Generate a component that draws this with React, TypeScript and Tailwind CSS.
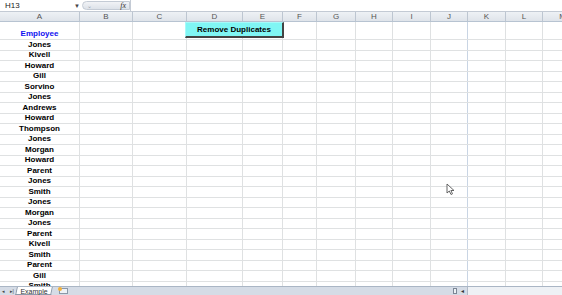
import React from "react";

const cols = [
  { l: "A", w: 80 },
  { l: "B", w: 53 },
  { l: "C", w: 54 },
  { l: "D", w: 56 },
  { l: "E", w: 40 },
  { l: "F", w: 34 },
  { l: "G", w: 39 },
  { l: "H", w: 37 },
  { l: "I", w: 38 },
  { l: "J", w: 37 },
  { l: "K", w: 38 },
  { l: "L", w: 37 },
  { l: "M", w: 40 },
];

const names = [
  "Jones", "Kivell", "Howard", "Gill", "Sorvino", "Jones", "Andrews", "Howard",
  "Thompson", "Jones", "Morgan", "Howard", "Parent", "Jones", "Smith", "Jones",
  "Morgan", "Jones", "Parent", "Kivell", "Smith", "Parent", "Gill", "Smith",
];

function Row({ first, h, top }: { first: React.ReactNode; h: string; top?: boolean }) {
  return (
    <div className={`flex shrink-0 ${h} border-b border-[#dfe1e2]`}>
      {cols.map((c, i) => (
        <div
          key={c.l}
          style={{ width: c.w }}
          className={`shrink-0 border-r ${i === 9 ? "border-[#c9d5e4]" : "border-[#dfe1e2]"} flex justify-center ${top ? "items-end pb-[1px]" : "items-center"}`}
        >
          {i === 0 ? first : null}
        </div>
      ))}
    </div>
  );
}

export default function App() {
  return (
    <div className="relative w-[562px] h-[295px] overflow-hidden bg-white flex flex-col font-['Liberation_Sans',Arial,sans-serif] text-[8px] leading-none">
      {/* formula bar */}
      <div className="flex h-[12px] shrink-0 border-b border-[#c3cad4] bg-white">
        <div className="w-[82px] flex items-center justify-between pl-[5px] pr-[2px] text-[8px] text-[#222]">
          <span>H13</span>
          <span className="text-[6px] text-[#444]">▼</span>
        </div>
        <div className="w-[48px] my-[1px] rounded-l-full bg-gradient-to-b from-[#f1f3f6] to-[#dde2e9] border border-[#c4cbd5] flex items-center justify-between pl-[4px] pr-[3px]">
          <span className="text-[6px] text-[#9aa3ae]">⌄</span>
          <span className="italic font-['Liberation_Serif',serif] text-[8px] text-[#333]">fx</span>
        </div>
        <div className="flex-1 border-l border-[#c4cbd5]" />
      </div>

      {/* column headers */}
      <div className="flex h-[10px] shrink-0 bg-gradient-to-b from-[#eef1f5] to-[#dfe4ea] border-b border-[#b7c3d1]">
        {cols.map((c) => (
          <div
            key={c.l}
            style={{ width: c.w }}
            className="shrink-0 border-r border-[#bdc6d1] flex items-center justify-center text-[8px] text-[#555]"
          >
            {c.l}
          </div>
        ))}
      </div>

      {/* grid */}
      <div className="flex-1 flex flex-col overflow-hidden font-bold">
        <Row top h="h-[18px]" first={<span className="text-[#1010f0]">Employee</span>} />
        {names.map((n, i) => (
          <Row key={i} h="h-[10.5px]" first={<span className="text-black">{n}</span>} />
        ))}
      </div>

      {/* sheet tabs */}
      <div className="flex h-[9px] shrink-0 bg-[#d5dce6] border-t border-[#aab6c5] items-stretch">
        <div className="w-[16px] flex items-center justify-around text-[5px] text-[#444]">
          <span>◂</span>
          <span>▸|</span>
        </div>
        <div className="relative w-[36px] flex items-center justify-center text-[7px] text-[#333]">
          <div className="absolute inset-0 bg-white border-x border-b border-[#8d9aab] -skew-x-12" />
          <span className="relative">Example</span>
        </div>
        <div className="w-[18px] ml-[2px] flex items-center justify-center">
          <div className="w-[9px] h-[6px] border border-[#8b98a8] bg-[#eef2f7] relative">
            <div className="absolute -top-[2px] -left-[2px] w-[4px] h-[4px] rounded-full bg-[#f3b23b]" />
          </div>
        </div>
        <div className="flex-1" />
        <div className="w-[4px] my-[1px] border border-[#7c8796] bg-[#eef1f5]" />
        <div className="w-[10px] flex items-center justify-center text-[6px] text-[#333]">◂</div>
        <div className="w-[95px] bg-[#eef1f5] border-l border-[#b0bac7]" />
      </div>

      {/* floating button */}
      <div className="absolute left-[185px] top-[22px] w-[99px] h-[16px] bg-[#80f6f4] border-r-2 border-b-2 border-[#444] border-l border-t border-l-[#a6fafa] border-t-[#a6fafa] flex items-center justify-center font-bold text-[8px] text-black">
        Remove Duplicates
      </div>

      {/* mouse pointer */}
      <svg className="absolute left-[446px] top-[183px]" width="10" height="13" viewBox="0 0 10 13">
        <path d="M1 1 L1 10 L3.3 8 L5 11.5 L6.5 10.8 L4.9 7.5 L8 7.5 Z" fill="#fff" stroke="#555" strokeWidth="0.9" />
      </svg>
    </div>
  );
}
